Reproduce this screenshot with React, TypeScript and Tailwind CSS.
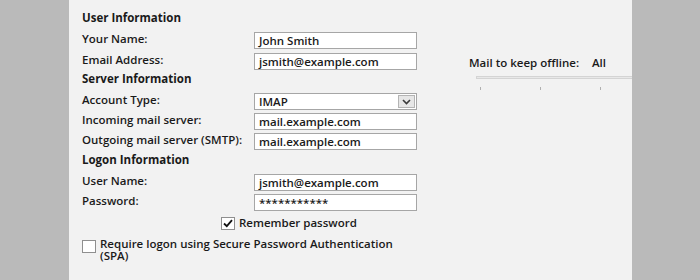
const font = { fontFamily: '"Open Sans", "Noto Sans", sans-serif' };

function Heading({ children, className = "" }: { children: string; className?: string }) {
  return <div className={`flex h-[18px] items-center text-[11.5px] font-bold text-[#1a1a1a] ${className}`}>{children}</div>;
}

function Field({ label, value, className = "" }: { label: string; value: string; className?: string }) {
  return (
    <div className={`flex h-[17px] items-center ${className}`}>
      <div className="w-[172px] -mt-[3px] text-[11.5px] font-semibold text-[#1a1a1a]">{label}</div>
      <div className="flex h-[17px] w-[163px] items-center border border-[#a6a6a6] bg-white px-[4px] text-[11.5px] font-semibold text-[#1a1a1a]">
        {value}
      </div>
    </div>
  );
}

function Select({ label, value, className = "" }: { label: string; value: string; className?: string }) {
  return (
    <div className={`flex h-[17px] items-center ${className}`}>
      <div className="w-[172px] -mt-[3px] text-[11.5px] font-semibold text-[#1a1a1a]">{label}</div>
      <div className="flex h-[17px] w-[163px] items-center border border-[#a6a6a6] bg-white pl-[4px] text-[11.5px] font-semibold text-[#1a1a1a]">
        <span className="grow">{value}</span>
        <span className="mr-[1px] flex h-[13px] w-[17px] items-center justify-center border border-[#b4b4b4] bg-[#e6e6e6]">
          <svg width="9" height="6" viewBox="0 0 9 6">
            <path d="M1 1 L4.5 4.5 L8 1" fill="none" stroke="#3a3a3a" strokeWidth="1.6" />
          </svg>
        </span>
      </div>
    </div>
  );
}

function Box({ checked }: { checked?: boolean }) {
  return (
    <span className="flex h-[13px] w-[14px] shrink-0 items-center justify-center border border-[#8f8f8f] bg-white">
      {checked && (
        <svg width="10" height="9" viewBox="0 0 10 9">
          <path d="M1 4.5 L3.8 7.2 L9 1.2" fill="none" stroke="#111" strokeWidth="1.8" />
        </svg>
      )}
    </span>
  );
}

export default function App() {
  return (
    <div className="flex h-[280px] w-[700px] bg-[#bababa]" style={font}>
      <div className="ml-[69px] flex h-full w-[563px] overflow-hidden bg-[#f2f2f2] pl-[13px]">
        <div className="flex w-[335px] shrink-0 flex-col pt-[9px]">
          <Heading>User Information</Heading>
          <Field label="Your Name:" value="John Smith" className="mt-[5px]" />
          <Field label="Email Address:" value="jsmith@example.com" className="mt-[4px]" />
          <Heading className="mt-[0px]">Server Information</Heading>
          <Select label="Account Type:" value="IMAP" className="mt-[5px]" />
          <Field label="Incoming mail server:" value="mail.example.com" className="mt-[3px]" />
          <Field label="Outgoing mail server (SMTP):" value="mail.example.com" className="mt-[3px]" />
          <Heading className="mt-[1px]">Logon Information</Heading>
          <Field label="User Name:" value="jsmith@example.com" className="mt-[5px]" />
          <Field label="Password:" value="***********" className="mt-[3px]" />
          <div className="mt-[5px] flex h-[14px] items-center pl-[139px]">
            <Box checked />
            <span className="ml-[4px] text-[11.5px] font-semibold text-[#1a1a1a]">Remember password</span>
          </div>
          <div className="mt-[10px] flex items-start">
            <Box />
            <span className="ml-[4px] -mt-[2px] whitespace-nowrap text-[11.5px] font-semibold leading-[12px] text-[#1a1a1a]">
              Require logon using Secure Password Authentication
              <br />
              (SPA)
            </span>
          </div>
        </div>
        <div className="ml-[52px] flex flex-col pt-[54px]">
          <div className="flex text-[11.5px] font-semibold text-[#1a1a1a]">
            <span className="w-[123px]">Mail to keep offline:</span>
            <span>All</span>
          </div>
          <div className="ml-[7px] mt-[5px] h-[3px] w-[200px] border border-[#d4d4d4] bg-[#e8e8e8]" />
          <div className="ml-[11px] mt-[8px] flex h-[3px] gap-[59px]">
            <span className="w-px bg-[#b0b0b0]" />
            <span className="w-px bg-[#b0b0b0]" />
            <span className="w-px bg-[#b0b0b0]" />
          </div>
        </div>
      </div>
    </div>
  );
}
